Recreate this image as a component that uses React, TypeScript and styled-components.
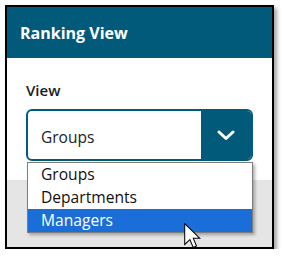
import React from 'react';
import styled, { createGlobalStyle } from 'styled-components';

const GlobalStyle = createGlobalStyle`
  body {
    margin: 0;
    background: #ffffff;
    font-family: 'Open Sans', 'Noto Sans', sans-serif;
  }
`;

const Page = styled.div`
  padding: 5px 0 0 5px;
`;

const Frame = styled.div`
  position: relative;
  width: 265px;
  border: 2px solid #000;
  box-shadow: 3px 3px 4px rgba(0, 0, 0, 0.35);
  display: flex;
  flex-direction: column;
`;

const Header = styled.div`
  height: 51px;
  background: #025a7b;
  display: flex;
  align-items: center;
  padding-left: 13px;
  color: #fff;
  font-size: 16px;
  font-weight: 700;
`;

const Body = styled.div`
  height: 122px;
  background: #fff;
  padding: 22px 19px 0 19px;
  box-sizing: border-box;
`;

const Label = styled.div`
  font-size: 15px;
  font-weight: 600;
  line-height: 20px;
  color: #1c1c1c;
  margin-bottom: 9px;
`;

const SelectWrap = styled.div`
  position: relative;
`;

const Select = styled.div`
  height: 52px;
  box-sizing: border-box;
  border: 2px solid #025a7b;
  border-radius: 6px;
  display: flex;
  overflow: hidden;
`;

const Value = styled.div`
  flex: 1;
  padding: 3px 0 0 13px;
  display: flex;
  align-items: center;
  font-size: 15.5px;
  color: #222;
`;

const Toggle = styled.div`
  width: 50px;
  background: #025a7b;
  display: flex;
  align-items: center;
  justify-content: center;
`;

const Footer = styled.div`
  height: 67px;
  background: #e5e5e5;
`;

const Menu = styled.ul`
  position: absolute;
  top: calc(100% + 1px);
  left: 1px;
  right: 0;
  margin: 0;
  padding: 0;
  list-style: none;
  background: #fff;
  border: 1px solid #7d7d7d;
  box-shadow: 2px 2px 3px rgba(0, 0, 0, 0.3);
  z-index: 2;
`;

const Option = styled.li<{ $active?: boolean }>`
  height: 23px;
  line-height: 23px;
  padding-left: 13px;
  font-size: 15.6px;
  color: ${(p) => (p.$active ? '#fff' : '#111')};
  background: ${(p) => (p.$active ? '#1b6ed8' : 'transparent')};
`;

const Cursor = styled.svg`
  position: absolute;
  left: 177px;
  top: 216px;
  z-index: 3;
`;

const options = ['Groups', 'Departments', 'Managers'];

const App: React.FC = () => {
  return (
    <Page>
      <GlobalStyle />
      <Frame>
        <Header>Ranking View</Header>
        <Body>
          <Label>View</Label>
          <SelectWrap>
            <Select>
              <Value>Groups</Value>
              <Toggle>
                <svg width="18" height="11" viewBox="0 0 18 11">
                  <path d="M2 2 L9 8.5 L16 2" fill="none" stroke="#fff" strokeWidth="3" strokeLinecap="round" strokeLinejoin="round" />
                </svg>
              </Toggle>
            </Select>
            <Menu>
              {options.map((o) => (
                <Option key={o} $active={o === 'Managers'}>
                  {o}
                </Option>
              ))}
            </Menu>
          </SelectWrap>
        </Body>
        <Footer />
        <Cursor width="17" height="26" viewBox="0 0 13 20">
          <path d="M0.5 0.5 V16.5 L4.5 12.8 L7 18.8 L9.6 17.7 L7.1 11.8 H12.2 Z" fill="#fff" stroke="#000" strokeWidth="0.8" strokeLinejoin="miter" />
        </Cursor>
      </Frame>
    </Page>
  );
};

export default App;
